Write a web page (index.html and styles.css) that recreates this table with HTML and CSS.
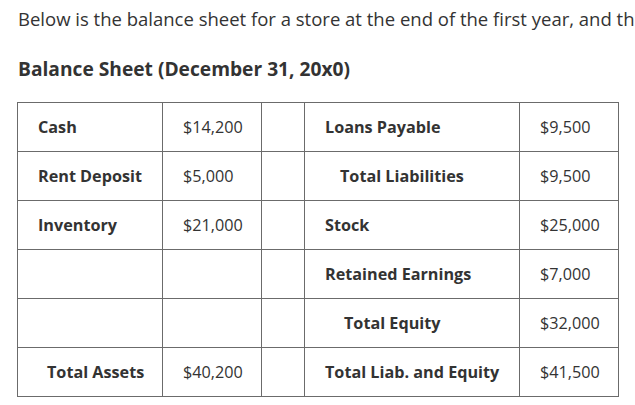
FILE: index.html
```html
<!DOCTYPE html>
<html>
<head>
<meta charset="utf-8">
<link rel="stylesheet" href="styles.css">
</head>
<body>
<p class="intro">Below is the balance sheet for a store at the end of the first year, and the income statement for the year.</p>
<p class="heading">Balance Sheet (December 31, 20x0)</p>
<table class="sheet">
  <colgroup>
    <col class="c1"><col class="c2"><col class="c3"><col class="c4"><col class="c5">
  </colgroup>
  <tr><td class="lbl">Cash</td><td>$14,200</td><td></td><td class="lbl">Loans Payable</td><td>$9,500</td></tr>
  <tr><td class="lbl">Rent Deposit</td><td>$5,000</td><td></td><td class="lbl ind1">Total Liabilities</td><td>$9,500</td></tr>
  <tr><td class="lbl">Inventory</td><td>$21,000</td><td></td><td class="lbl">Stock</td><td>$25,000</td></tr>
  <tr><td></td><td></td><td></td><td class="lbl">Retained Earnings</td><td>$7,000</td></tr>
  <tr><td></td><td></td><td></td><td class="lbl ind2">Total Equity</td><td>$32,000</td></tr>
  <tr><td class="lbl ind3">Total Assets</td><td>$40,200</td><td></td><td class="lbl">Total Liab. and Equity</td><td>$41,500</td></tr>
</table>
</body>
</html>
```
FILE: styles.css
```css
html, body {
  margin: 0;
  background: #fff;
}
body {
  padding: 0 0 0 18px;
  font-family: "Open Sans", "Noto Sans", sans-serif;
  color: #333;
  overflow: hidden;
  width: 700px;
}
.intro {
  margin: 0;
  padding-top: 5px;
  font-size: 18.5px;
  line-height: 28px;
  white-space: nowrap;
}
.heading {
  margin: 0;
  padding-top: 22px;
  font-size: 19.2px;
  font-weight: 700;
  line-height: 28px;
}
.sheet {
  margin: 19px 0 0 -1px;
  border-collapse: collapse;
  table-layout: fixed;
  width: 602px;
  font-size: 16.2px;
}
.c1 { width: 145px; }
.c2 { width: 99px; }
.c3 { width: 43px; }
.c4 { width: 215px; }
.c5 { width: 99px; }
.sheet td {
  border: 1px solid #6b6b6b;
  height: 48px;
  padding: 0 0 0 20px;
  white-space: nowrap;
  vertical-align: middle;
}
.sheet td.lbl {
  font-weight: 700;
}
.sheet td.ind1 { padding-left: 35px; }
.sheet td.ind2 { padding-left: 39px; }
.sheet td.ind3 { padding-left: 29px; }
```
